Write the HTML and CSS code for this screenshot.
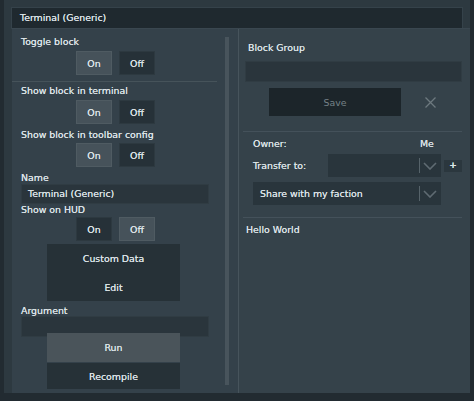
FILE: index.html
```html
<!DOCTYPE html>
<html>
<head>
<meta charset="utf-8">
<link rel="stylesheet" href="styles.css">
</head>
<body>
<div class="frame">
  <div class="titlebar">Terminal (Generic)</div>
  <div class="panels">
    <div class="left">
      <div class="col">
        <div class="label">Toggle block</div>
        <div class="toggle t1"><div class="btn on">On</div><div class="btn">Off</div></div>
        <div class="sep-left"></div>
        <div class="label l2">Show block in terminal</div>
        <div class="toggle t1"><div class="btn on">On</div><div class="btn">Off</div></div>
        <div class="label l3">Show block in toolbar config</div>
        <div class="toggle t3"><div class="btn on">On</div><div class="btn">Off</div></div>
        <div class="label l3">Name</div>
        <div class="input name">Terminal (Generic)</div>
        <div class="label">Show on HUD</div>
        <div class="toggle t4"><div class="btn">On</div><div class="btn on">Off</div></div>
        <div class="box">
          <div class="box-row">Custom Data</div>
          <div class="box-row">Edit</div>
        </div>
        <div class="label l4">Argument</div>
        <div class="input arg"></div>
        <div class="wide run">Run</div>
        <div class="wide recompile">Recompile</div>
      </div>
      <div class="scrollbar"></div>
    </div>
    <div class="right">
      <div class="label rl">Block Group</div>
      <div class="input group"></div>
      <div class="save-row">
        <div class="save">Save</div>
        <svg class="close" width="11" height="11" viewBox="0 0 11 11"><path d="M0.5 0.5 L10.5 10.5 M10.5 0.5 L0.5 10.5" stroke="#6d797f" stroke-width="1.3" fill="none"/></svg>
      </div>
      <div class="sep-right s1"></div>
      <div class="owner-row"><span class="owner">Owner:</span><span>Me</span></div>
      <div class="transfer-row">
        <span class="transfer">Transfer to:</span>
        <div class="dropdown dd1">
          <span class="dd-text"></span>
          <span class="dd-div"></span>
          <svg class="chev" width="14" height="8" viewBox="0 0 14 8"><polyline points="1,1 7,7 13,1" stroke="#5f6b72" stroke-width="1.6" fill="none"/></svg>
        </div>
        <div class="plus">+</div>
      </div>
      <div class="dropdown dd2">
        <span class="dd-text">Share with my faction</span>
        <span class="dd-div"></span>
        <svg class="chev" width="14" height="8" viewBox="0 0 14 8"><polyline points="1,1 7,7 13,1" stroke="#5f6b72" stroke-width="1.6" fill="none"/></svg>
      </div>
      <div class="sep-right s2"></div>
      <div class="label hello">Hello World</div>
    </div>
  </div>
</div>
</body>
</html>
```
FILE: styles.css
```css
* { box-sizing: border-box; }
body {
  margin: 0;
  width: 474px;
  height: 401px;
  background: #222b31;
  font-family: "DejaVu Sans", sans-serif;
  font-size: 9.4px;
  color: #dce3e7;
  text-shadow: 0 0 0.4px #dce3e7;
  overflow: hidden;
}
.frame {
  margin-left: 4px;
  width: 466px;
  height: 393px;
  background: #2d3940;
  padding-top: 8px;
  display: flex;
  flex-direction: column;
}
.titlebar {
  margin-left: 8px;
  width: 450px;
  height: 20px;
  background: #1f292f;
  box-shadow: 0 0 0 1px #35424a;
  padding-left: 8px;
  line-height: 20px;
}
.panels {
  margin-left: 8px;
  flex: 1;
  display: flex;
  border-top: 1px solid #3a4750;
}
.left {
  width: 227px;
  background: #34414a;
  display: flex;
  padding-left: 9px;
  border-right: 1px solid #47545c;
}
.col {
  width: 188px;
  display: flex;
  flex-direction: column;
  padding-top: 7px;
}
.scrollbar {
  margin-left: 16px;
  margin-top: 8px;
  width: 4px;
  height: 348px;
  background: #48545c;
}
.label {
  height: 12px;
  line-height: 12px;
  white-space: nowrap;
}
.l2 { margin-top: 3px; }
.l3 { margin-top: 5px; }
.l4 { margin-top: 4px; }
.toggle {
  display: flex;
  gap: 7px;
  margin-left: 55px;
}
.t1 { margin-top: 3px; }
.t3 { margin-top: 2px; }
.t4 { margin-top: 1px; }
.btn {
  width: 36px;
  height: 24px;
  display: flex;
  align-items: center;
  justify-content: center;
  background: #263138;
  border: 1px solid #2d3940;
}
.btn.on {
  background: #46525a;
  border-color: #4f5b62;
}
.sep-left {
  margin-top: 6px;
  margin-left: -9px;
  width: 205px;
  height: 1px;
  background: #46535a;
}
.input {
  background: #2a353c;
  border: 1px solid #303c43;
  width: 188px;
}
.name {
  height: 20px;
  line-height: 18px;
  padding-left: 6px;
}
.box {
  margin-top: 3px;
  margin-left: 26px;
  width: 133px;
  height: 57px;
  background: #263137;
  display: flex;
  flex-direction: column;
}
.box-row {
  height: 28px;
  display: flex;
  align-items: center;
  justify-content: center;
}
.box-row + .box-row { margin-top: 1px; }
.arg {
  margin-top: -1px;
  height: 21px;
}
.wide {
  margin-left: 26px;
  width: 133px;
  display: flex;
  align-items: center;
  justify-content: center;
}
.run {
  margin-top: -4px;
  height: 29px;
  background: #4a545a;
}
.recompile {
  margin-top: 1px;
  height: 26px;
  background: #263137;
}
.right {
  flex: 1;
  background: #35424a;
  padding-top: 13px;
  display: flex;
  flex-direction: column;
}
.rl { margin-left: 9px; }
.group {
  margin-top: 7px;
  margin-left: 6px;
  width: 217px;
  height: 21px;
}
.save-row {
  margin-top: 6px;
  display: flex;
  align-items: center;
}
.save {
  margin-left: 30px;
  width: 132px;
  height: 28px;
  background: #1c252a;
  color: #75818760;
  color: #758187;
  text-shadow: none;
  display: flex;
  align-items: center;
  justify-content: center;
}
.close { margin-left: 24px; }
.sep-right {
  margin-left: 4px;
  width: 219px;
  height: 1px;
  background: #44515a;
}
.s1 { margin-top: 15px; }
.s2 { margin-top: 12px; }
.owner-row {
  margin-top: 6px;
  margin-left: 14px;
  height: 12px;
  line-height: 12px;
  display: flex;
}
.owner { width: 167px; }
.transfer-row {
  margin-top: 4px;
  margin-left: 14px;
  display: flex;
  align-items: center;
}
.transfer { width: 75px; }
.dropdown {
  height: 23px;
  background: #29353c;
  display: flex;
  align-items: center;
  padding-right: 4px;
}
.dd1 { width: 113px; }
.dd2 {
  margin-top: 5px;
  margin-left: 14px;
  width: 188px;
}
.dd-text {
  flex: 1;
  padding-left: 7px;
  white-space: nowrap;
}
.dd-div {
  width: 1px;
  height: 15px;
  background: #56636a;
  margin-right: 3px;
}
.chev { display: block; }
.plus {
  margin-left: 3px;
  width: 18px;
  height: 12px;
  background: #2b373e;
  display: flex;
  align-items: center;
  justify-content: center;
  font-size: 9px;
  font-weight: bold;
  line-height: 1;
}
.hello {
  margin-top: 6px;
  margin-left: 7px;
}
```
